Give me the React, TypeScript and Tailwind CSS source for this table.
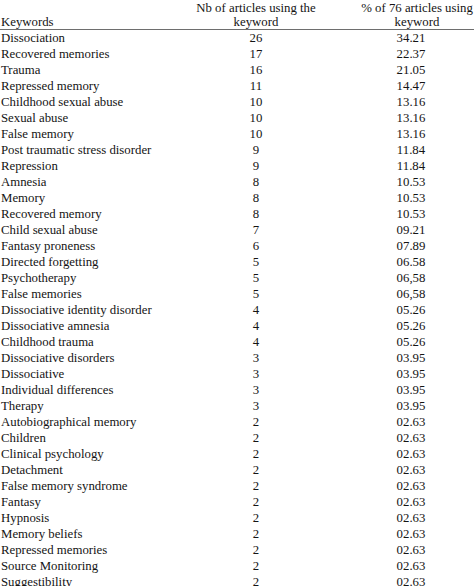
const rows: [string, string, string][] = [
  ["Dissociation", "26", "34.21"],
  ["Recovered memories", "17", "22.37"],
  ["Trauma", "16", "21.05"],
  ["Repressed memory", "11", "14.47"],
  ["Childhood sexual abuse", "10", "13.16"],
  ["Sexual abuse", "10", "13.16"],
  ["False memory", "10", "13.16"],
  ["Post traumatic stress disorder", "9", "11.84"],
  ["Repression", "9", "11.84"],
  ["Amnesia", "8", "10.53"],
  ["Memory", "8", "10.53"],
  ["Recovered memory", "8", "10.53"],
  ["Child sexual abuse", "7", "09.21"],
  ["Fantasy proneness", "6", "07.89"],
  ["Directed forgetting", "5", "06.58"],
  ["Psychotherapy", "5", "06,58"],
  ["False memories", "5", "06,58"],
  ["Dissociative identity disorder", "4", "05.26"],
  ["Dissociative amnesia", "4", "05.26"],
  ["Childhood trauma", "4", "05.26"],
  ["Dissociative disorders", "3", "03.95"],
  ["Dissociative", "3", "03.95"],
  ["Individual differences", "3", "03.95"],
  ["Therapy", "3", "03.95"],
  ["Autobiographical memory", "2", "02.63"],
  ["Children", "2", "02.63"],
  ["Clinical psychology", "2", "02.63"],
  ["Detachment", "2", "02.63"],
  ["False memory syndrome", "2", "02.63"],
  ["Fantasy", "2", "02.63"],
  ["Hypnosis", "2", "02.63"],
  ["Memory beliefs", "2", "02.63"],
  ["Repressed memories", "2", "02.63"],
  ["Source Monitoring", "2", "02.63"],
  ["Suggestibility", "2", "02.63"],
];

export default function App() {
  return (
    <div className="w-[474px] h-[586px] overflow-hidden bg-white text-[#141414] text-[12.8px]" style={{ fontFamily: '"Liberation Serif", "Times New Roman", serif' }}>
      <div className="w-[520px]">
        <div className="grid grid-cols-[178px_156px_186px] pt-[1px] leading-[14px] border-b border-[#6e6e6e] h-[30px]">
          <div className="self-end pl-[1px]">Keywords</div>
          <div className="text-center">Nb of articles using the<br />keyword</div>
          <div className="text-center pr-[20px] whitespace-nowrap">% of 76 articles using<br />keyword</div>
        </div>
        {rows.map(([k, n, p]) => (
          <div key={k} className="grid grid-cols-[178px_156px_186px] leading-[16px]">
            <div className="pl-[1px] whitespace-nowrap">{k}</div>
            <div className="text-center">{n}</div>
            <div className="text-center pr-[32px]">{p}</div>
          </div>
        ))}
      </div>
    </div>
  );
}
